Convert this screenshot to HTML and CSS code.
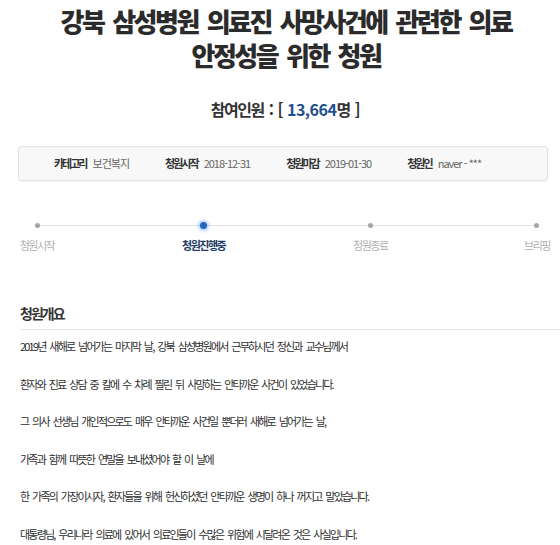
FILE: index.html
```html
<!DOCTYPE html>
<html lang="ko">
<head>
  <meta charset="UTF-8" />
  <title>청원</title>
  <link rel="stylesheet" href="styles.css">
</head>
<body>
  <div class="page">
    <h1 class="title">강북 삼성병원 의료진 사망사건에 관련한 의료<br>안정성을 위한 청원</h1>

    <div class="count">참여인원 : [ <span class="num">13,664</span>명 ]</div>

    <div class="info">
      <div class="item"><b>카테고리</b> <span>보건복지</span></div>
      <div class="item"><b>청원시작</b> <span>2018-12-31</span></div>
      <div class="item"><b>청원마감</b> <span>2019-01-30</span></div>
      <div class="item"><b>청원인</b> <span>naver - ***</span></div>
    </div>

    <div class="steps">
      <div class="step"><div class="dot-wrap"><i class="dot"></i></div><span>청원시작</span></div>
      <div class="step on"><div class="dot-wrap"><i class="dot"></i></div><span>청원진행중</span></div>
      <div class="step"><div class="dot-wrap"><i class="dot"></i></div><span>청원종료</span></div>
      <div class="step"><div class="dot-wrap"><i class="dot"></i></div><span>브리핑</span></div>
    </div>

    <div class="summary">
      <h2>청원개요</h2>
      <div class="text">
        <p>2019년 새해로 넘어가는 마지막 날, 강북 삼성병원에서 근무하시던 정신과 교수님께서</p>
        <p>환자와 진료 상담 중 칼에 수 차례 찔린 뒤 사망하는 안타까운 사건이 있었습니다.</p>
        <p>그 의사 선생님 개인적으로도 매우 안타까운 사건일 뿐더러 새해로 넘어가는 날,</p>
        <p>가족과 함께 따뜻한 연말을 보내셨어야 할 이 날에</p>
        <p>한 가족의 가장이시자, 환자들을 위해 헌신하셨던 안타까운 생명이 하나 꺼지고 말았습니다.</p>
        <p>대통령님, 우리나라 의료에 있어서 의료인들이 수많은 위험에 시달려온 것은 사실입니다.</p>
      </div>
    </div>
  </div>
</body>
</html>
```

FILE: styles.css
```css
body {
  margin: 0;
  background: #fff;
  color: #333;
  font-family: "Noto Sans CJK KR", "Noto Sans", sans-serif;
  overflow: hidden;
}

.page {
  padding: 0 12px 0 18px;
}

.title {
  margin: 4px 0 0;
  padding-left: 6px;
  text-align: center;
  font-size: 26px;
  line-height: 34px;
  font-weight: 900;
  letter-spacing: -2.5px;
  word-spacing: 4px;
  color: #2b2b2b;
}

.count {
  margin-top: 27px;
  padding-left: 4px;
  text-align: center;
  font-size: 16px;
  line-height: 20px;
  font-weight: 700;
  letter-spacing: -1.5px;
  word-spacing: 2px;
  color: #333;
}

.count .num {
  color: #1f4f91;
  letter-spacing: -0.5px;
}

.info {
  margin-top: 27px;
  display: flex;
  gap: 36px;
  padding: 9px 0 9px 35px;
  background: #f8f8f8;
  border: 1px solid #e2e2e2;
  border-radius: 3px;
  box-shadow: 0 1px 2px rgba(0,0,0,0.05);
  font-size: 11px;
  line-height: 15px;
}

.item b {
  color: #333;
  letter-spacing: -2px;
  margin-right: 3px;
}

.item span {
  color: #666;
  letter-spacing: -1px;
}

.steps {
  position: relative;
  display: flex;
  justify-content: space-between;
  margin: 40px -9px 0 -1px;
}

.steps::before {
  content: "";
  position: absolute;
  top: 4px;
  left: 20px;
  right: 20px;
  height: 1px;
  background: #e0e0e0;
}

.step {
  width: 40px;
  display: flex;
  flex-direction: column;
  align-items: center;
  position: relative;
}

.dot-wrap {
  height: 8px;
  display: flex;
  align-items: center;
  justify-content: center;
}

.dot {
  display: block;
  width: 5px;
  height: 5px;
  border-radius: 50%;
  background: #a5a5a5;
}

.step span {
  margin-top: 9px;
  white-space: nowrap;
  font-size: 11px;
  line-height: 14px;
  letter-spacing: -1.5px;
  color: #b0b0b0;
}

.step.on .dot {
  width: 7px;
  height: 7px;
  background: #2566c4;
  box-shadow: 0 0 3px 2px rgba(90, 160, 255, 0.45);
}

.step.on span {
  color: #1e3a66;
  font-weight: 700;
}

.summary {
  margin: 51px -12px 0 2px;
}

.summary h2 {
  margin: 0;
  padding-bottom: 6px;
  border-bottom: 1px solid #e6e6e6;
  font-size: 14px;
  line-height: 20px;
  font-weight: 700;
  letter-spacing: -2px;
  color: #333;
}

.text {
  padding-top: 6px;
}

.text p {
  margin: 0 0 17.5px;
  font-size: 11px;
  line-height: 20px;
  letter-spacing: -1.8px;
  word-spacing: 2.5px;
  color: #2e2e2e;
}
```
